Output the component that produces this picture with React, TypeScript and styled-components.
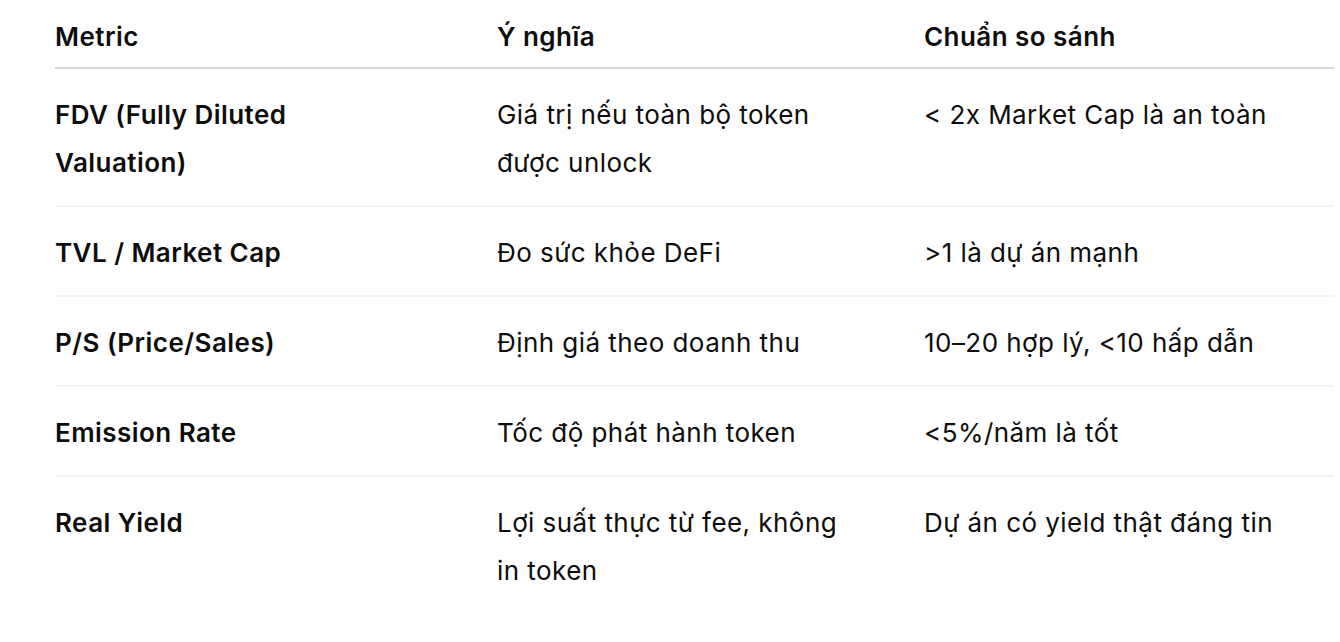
import styled, { createGlobalStyle } from "styled-components";

const GlobalStyle = createGlobalStyle`
  html, body {
    margin: 0;
    padding: 0;
    background: #ffffff;
  }
  body {
    font-family: Inter, "Noto Sans", "Liberation Sans", sans-serif;
    color: #0d0d0d;
    -webkit-font-smoothing: antialiased;
  }
`;

interface Row {
  metric: string;
  meaning: string;
  benchmark: string;
}

const rows: Row[] = [
  {
    metric: "FDV (Fully Diluted Valuation)",
    meaning: "Giá trị nếu toàn bộ token được unlock",
    benchmark: "< 2x Market Cap là an toàn",
  },
  {
    metric: "TVL / Market Cap",
    meaning: "Đo sức khỏe DeFi",
    benchmark: ">1 là dự án mạnh",
  },
  {
    metric: "P/S (Price/Sales)",
    meaning: "Định giá theo doanh thu",
    benchmark: "10–20 hợp lý, <10 hấp dẫn",
  },
  {
    metric: "Emission Rate",
    meaning: "Tốc độ phát hành token",
    benchmark: "<5%/năm là tốt",
  },
  {
    metric: "Real Yield",
    meaning: "Lợi suất thực từ fee, không in token",
    benchmark: "Dự án có yield thật đáng tin",
  },
];

const columns = [
  { key: "metric" as const, title: "Metric", width: 442, text: 330 },
  { key: "meaning" as const, title: "Ý nghĩa", width: 427, text: 362 },
  { key: "benchmark" as const, title: "Chuẩn so sánh", width: 410, text: 400 },
];

const Page = styled.div`
  padding: 13px 0 0 55px;
  width: 1285px;
`;

const Table = styled.table`
  border-collapse: collapse;
  table-layout: fixed;
  width: 1279px;
  font-size: 26px;
  line-height: 48px;
  letter-spacing: 0.45px;
`;

const HeadCell = styled.th<{ $width: number }>`
  width: ${(p) => p.$width}px;
  padding: 0 0 6px 0;
  text-align: left;
  font-weight: 600;
  vertical-align: bottom;
`;

const HeadRow = styled.tr`
  border-bottom: 2px solid #d9d9d9;
`;

const BodyRow = styled.tr<{ $last?: boolean }>`
  border-bottom: 2px solid ${(p) => (p.$last ? "transparent" : "#f3f3f3")};
`;

const Cell = styled.td<{ $bold?: boolean }>`
  padding: 22px 0 18px 0;
  vertical-align: top;
  font-weight: ${(p) => (p.$bold ? 600 : 400)};
`;

const CellText = styled.div<{ $max: number }>`
  max-width: ${(p) => p.$max}px;
`;

export default function App() {
  return (
    <>
      <GlobalStyle />
      <Page>
        <Table>
          <thead>
            <HeadRow>
              {columns.map((c) => (
                <HeadCell key={c.key} $width={c.width}>
                  {c.title}
                </HeadCell>
              ))}
            </HeadRow>
          </thead>
          <tbody>
            {rows.map((r, i) => (
              <BodyRow key={r.metric} $last={i === rows.length - 1}>
                {columns.map((c, ci) => (
                  <Cell key={c.key} $bold={ci === 0}>
                    <CellText $max={c.text}>{r[c.key]}</CellText>
                  </Cell>
                ))}
              </BodyRow>
            ))}
          </tbody>
        </Table>
      </Page>
    </>
  );
}
